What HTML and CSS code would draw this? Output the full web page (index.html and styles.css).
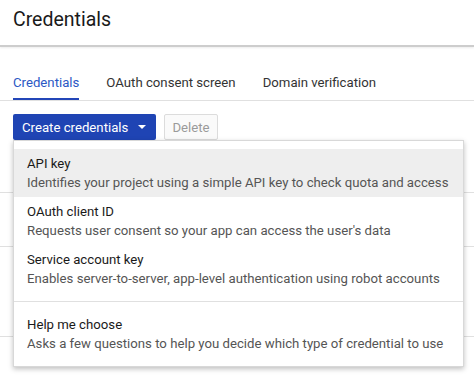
FILE: index.html
```html
<!DOCTYPE html>
<html lang="en">
<head>
  <meta charset="UTF-8">
  <title>Credentials</title>
  <link rel="stylesheet" href="styles.css">
</head>
<body>
  <header class="page-header">
    <h1>Credentials</h1>
  </header>

  <nav class="tabs">
    <a class="tab active">Credentials</a>
    <a class="tab">OAuth consent screen</a>
    <a class="tab">Domain verification</a>
  </nav>

  <main class="content">
    <div class="toolbar">
      <button class="btn btn-primary">
        <span>Create credentials</span>
        <span class="caret"></span>
      </button>
      <button class="btn btn-disabled">Delete</button>
    </div>

    <div class="table-wrap">
      <div class="table">
        <div class="row row-1"></div>
        <div class="row row-2"></div>
        <div class="row row-3"></div>
      </div>

      <div class="menu">
        <div class="menu-item hover">
          <div class="item-title">API key</div>
          <div class="item-desc">Identifies your project using a simple API key to check quota and access</div>
        </div>
        <div class="menu-item">
          <div class="item-title">OAuth client ID</div>
          <div class="item-desc">Requests user consent so your app can access the user's data</div>
        </div>
        <div class="menu-item">
          <div class="item-title">Service account key</div>
          <div class="item-desc">Enables server-to-server, app-level authentication using robot accounts</div>
        </div>
        <div class="menu-divider"></div>
        <div class="menu-item">
          <div class="item-title">Help me choose</div>
          <div class="item-desc">Asks a few questions to help you decide which type of credential to use</div>
        </div>
      </div>
    </div>
  </main>
</body>
</html>
```

FILE: styles.css
```css
* {
  margin: 0;
  padding: 0;
  box-sizing: border-box;
}

body {
  width: 474px;
  height: 377px;
  overflow: hidden;
  background: #fff;
  font-family: Roboto, 'Liberation Sans', sans-serif;
  color: #202124;
}

.page-header {
  height: 47px;
  padding: 9px 13px 0;
  border-bottom: 2px solid #cdcdcd;
  box-shadow: 0 1px 2px rgba(0, 0, 0, 0.08);
}

.page-header h1 {
  font-size: 19.5px;
  font-weight: 400;
  line-height: 22px;
  color: #1a1a1a;
}

.tabs {
  display: flex;
  gap: 27px;
  padding: 28px 13px 0;
  border-bottom: 1px solid #e0e0e0;
}

.tab {
  font-size: 13.2px;
  line-height: 16px;
  padding-bottom: 7px;
  border-bottom: 2px solid transparent;
  color: #333;
}

.tab.active {
  color: #2b58c4;
  border-bottom-color: #2346b8;
}

.toolbar {
  display: flex;
  gap: 8px;
  padding: 13px 13px 0;
}

.btn {
  height: 26px;
  font-family: inherit;
  font-size: 13.2px;
  border-radius: 2px;
  display: flex;
  align-items: center;
  white-space: nowrap;
}

.btn-primary {
  width: 143px;
  padding: 0 9px;
  background: #1f44b4;
  color: #fff;
  border: none;
  gap: 10px;
}

.caret {
  width: 0;
  height: 0;
  border-left: 4px solid transparent;
  border-right: 4px solid transparent;
  border-top: 4px solid #fff;
}

.btn-disabled {
  width: 54px;
  justify-content: center;
  background: #fafafa;
  color: #9a9a9a;
  border: 1px solid #dcdcdc;
}

.table-wrap {
  position: relative;
}

.table .row {
  border-bottom: 1px solid #e0e0e0;
}

.row-1 { height: 53px; }
.row-2 { height: 54px; }
.row-3 { height: 90px; }

.menu {
  position: absolute;
  top: 0;
  left: 13px;
  width: 451px;
  padding: 8px 0;
  background: #fff;
  border: 1px solid #d8d8d8;
  box-shadow: 0 2px 5px rgba(0, 0, 0, 0.25);
}

.menu-item {
  height: 48px;
  padding: 5px 13px;
}

.menu-item.hover {
  background: #eeeeee;
}

.item-title {
  font-size: 13.2px;
  line-height: 19px;
  color: #1a1a1a;
}

.item-desc {
  font-size: 13.2px;
  line-height: 19px;
  color: #555;
  white-space: nowrap;
}

.menu-divider {
  margin: 8px 0;
  border-top: 1px solid #e0e0e0;
}
```
